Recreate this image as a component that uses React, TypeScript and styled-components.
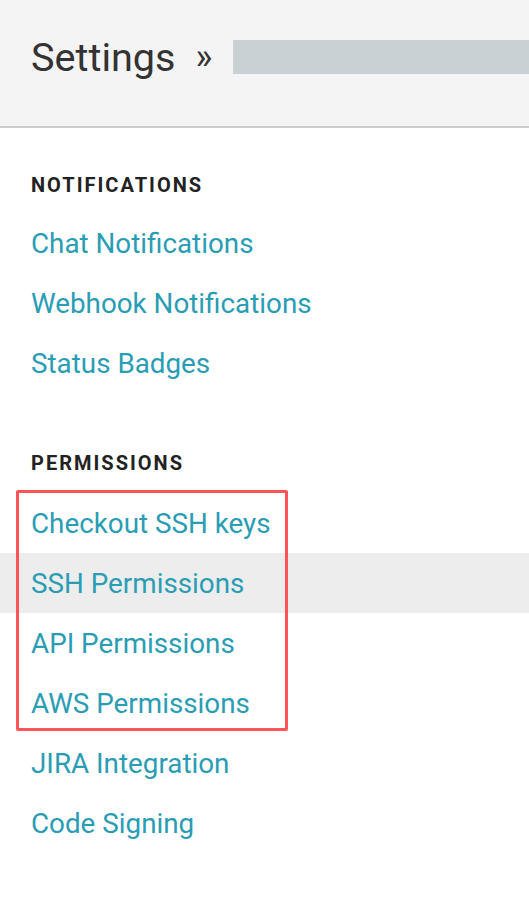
import React from "react";
import styled, { createGlobalStyle } from "styled-components";

const Global = createGlobalStyle`
  html, body { margin: 0; padding: 0; background: #ffffff; }
  body { font-family: Roboto, "Noto Sans", "Liberation Sans", sans-serif; }
`;

const Page = styled.div`
  width: 529px;
  min-height: 902px;
  background: #ffffff;
  overflow: hidden;
`;

const Header = styled.header`
  height: 114px;
  background: #f4f4f4;
  border-bottom: 2px solid #cccccc;
  display: flex;
  align-items: center;
  padding: 0 0 12px 31px;
  box-sizing: content-box;
`;

const Title = styled.h1`
  margin: 0;
  font-size: 39.6px;
  font-weight: 400;
  color: #333333;
  white-space: nowrap;
`;

const Sep = styled.span`
  font-size: 36px;
  color: #333333;
  margin: 0 21px 0 20px;
`;

const Blur = styled.div`
  flex: 1;
  height: 34px;
  background: #c9d1d4;
`;

const Nav = styled.nav`
  padding-top: 45px;
  display: flex;
  flex-direction: column;
`;

const SectionTitle = styled.h2<{ $gap: number }>`
  margin: ${(p) => p.$gap}px 0 0;
  padding: 0 31px;
  height: 24px;
  line-height: 24px;
  font-size: 20px;
  font-weight: 700;
  letter-spacing: 2px;
  color: #222222;
`;

const List = styled.ul<{ $top: number }>`
  list-style: none;
  margin: ${(p) => p.$top}px 0 0;
  padding: 0;
  position: relative;
`;

const Item = styled.li<{ $active?: boolean }>`
  height: 60px;
  display: flex;
  align-items: center;
  padding-left: 31px;
  background: ${(p) => (p.$active ? "#ededed" : "transparent")};
`;

const Link = styled.a`
  font-size: 27.8px;
  color: #2a9db5;
  text-decoration: none;
  white-space: nowrap;
`;

const Highlight = styled.div`
  position: absolute;
  left: 16px;
  top: -3px;
  width: 266px;
  height: 235px;
  border: 3px solid #ff5558;
  border-radius: 2px;
  pointer-events: none;
`;

export default function App() {
  return (
    <Page>
      <Global />
      <Header>
        <Title>Settings</Title>
        <Sep>»</Sep>
        <Blur />
      </Header>
      <Nav>
        <SectionTitle $gap={0}>NOTIFICATIONS</SectionTitle>
        <List $top={16}>
          <Item><Link>Chat Notifications</Link></Item>
          <Item><Link>Webhook Notifications</Link></Item>
          <Item><Link>Status Badges</Link></Item>
        </List>
        <SectionTitle $gap={58}>PERMISSIONS</SectionTitle>
        <List $top={18}>
          <Item><Link>Checkout SSH keys</Link></Item>
          <Item $active><Link>SSH Permissions</Link></Item>
          <Item><Link>API Permissions</Link></Item>
          <Item><Link>AWS Permissions</Link></Item>
          <Highlight />
        </List>
        <List $top={0}>
          <Item><Link>JIRA Integration</Link></Item>
          <Item><Link>Code Signing</Link></Item>
        </List>
      </Nav>
    </Page>
  );
}
